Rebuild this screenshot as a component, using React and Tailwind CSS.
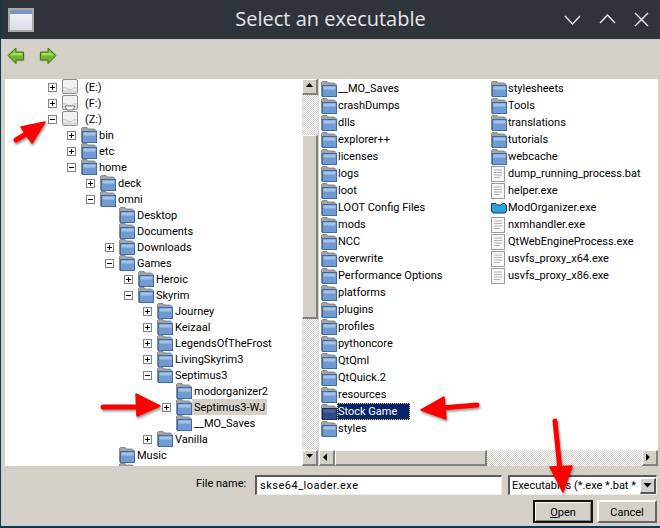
import React from "react";

const tree = [
  { d: 0, t: "(E:)", s: "+", drive: "hd" },
  { d: 0, t: "(F:)", s: "+", drive: "cd" },
  { d: 0, t: "(Z:)", s: "-", drive: "hd" },
  { d: 1, t: "bin", s: "+" },
  { d: 1, t: "etc", s: "+" },
  { d: 1, t: "home", s: "-" },
  { d: 2, t: "deck", s: "+" },
  { d: 2, t: "omni", s: "-" },
  { d: 3, t: "Desktop" },
  { d: 3, t: "Documents" },
  { d: 3, t: "Downloads", s: "+" },
  { d: 3, t: "Games", s: "-" },
  { d: 4, t: "Heroic", s: "+" },
  { d: 4, t: "Skyrim", s: "-" },
  { d: 5, t: "Journey", s: "+" },
  { d: 5, t: "Keizaal", s: "+" },
  { d: 5, t: "LegendsOfTheFrost", s: "+" },
  { d: 5, t: "LivingSkyrim3", s: "+" },
  { d: 5, t: "Septimus3", s: "-" },
  { d: 6, t: "modorganizer2" },
  { d: 6, t: "Septimus3-WJ", s: "+", hl: true },
  { d: 6, t: "__MO_Saves" },
  { d: 5, t: "Vanilla", s: "+" },
  { d: 3, t: "Music" },
  { d: 3, t: "" },
];

const col1 = ["__MO_Saves", "crashDumps", "dlls", "explorer++", "licenses", "logs", "loot", "LOOT Config Files", "mods", "NCC", "overwrite", "Performance Options", "platforms", "plugins", "profiles", "pythoncore", "QtQml", "QtQuick.2", "resources", "Stock Game", "styles"];
const col2 = [
  { t: "stylesheets", k: "folder" },
  { t: "Tools", k: "folder" },
  { t: "translations", k: "folder" },
  { t: "tutorials", k: "folder" },
  { t: "webcache", k: "folder" },
  { t: "dump_running_process.bat", k: "file" },
  { t: "helper.exe", k: "file" },
  { t: "ModOrganizer.exe", k: "mo" },
  { t: "nxmhandler.exe", k: "file" },
  { t: "QtWebEngineProcess.exe", k: "file" },
  { t: "usvfs_proxy_x64.exe", k: "file" },
  { t: "usvfs_proxy_x86.exe", k: "file" },
];

const Folder = ({ dark }) => (
  <svg width="16" height="16" viewBox="0 0 16 16" className="shrink-0">
    <path d="M0.5 15V1.5L1.5 0.5H6L7.5 2H13.5L15 3.5V5H2V15Z" fill="#a3a3a3" stroke="#77777a" strokeWidth="0.8" />
    <rect x="1.5" y="4.5" width="14" height="11" fill={dark ? "#2f4a86" : "#6f9bd2"} stroke={dark ? "#1d2f60" : "#3e6da6"} />
    <rect x="2.5" y="5.5" width="12" height="3" fill={dark ? "#4a66a0" : "#a5c3e6"} />
  </svg>
);

const Drive = ({ cd }) => (
  <svg width="16" height="16" viewBox="0 0 16 16" className="shrink-0">
    <rect x="0.5" y="0.5" width="15" height="14" rx="1.5" fill="#f2f2f2" stroke="#8c8c8c" />
    <path d="M1 9H5L6 10.5H10L11 9H15" fill="none" stroke="#c4c4c4" />
    <rect x="1" y="11" width="14" height="3" fill="#dcdcdc" />
    {cd && <path d="M3 11H13L11 15H5Z" fill="#ffffff" stroke="#777777" />}
  </svg>
);

const FileIcon = () => (
  <svg width="14" height="16" viewBox="0 0 14 16" className="shrink-0 mr-[2px]">
    <rect x="0.5" y="0.5" width="13" height="15" fill="#f7f7f7" stroke="#9a9a9a" />
    <path d="M3 4H11M3 6.5H11M3 9H11M3 11.5H9" stroke="#b4b4b4" />
  </svg>
);

const MoIcon = () => (
  <svg width="16" height="16" viewBox="0 0 16 16" className="shrink-0">
    <path d="M0.5 3.5H5L6.5 5H10L11.5 3.5H14L15.5 6V11L14 13H2L0.5 11Z" fill="#2ba3dd" stroke="#10384f" />
  </svg>
);

const Toggle = ({ s }) => (
  <span className="w-[9px] h-[9px] border border-[#808080] bg-white flex items-center justify-center relative shrink-0">
    <span className="absolute w-[5px] h-px bg-black" />
    {s === "+" && <span className="absolute w-px h-[5px] bg-black" />}
  </span>
);

const ScrollBtn = ({ dir }) => {
  const tri = {
    up: "M1 5L4.5 1L8 5Z",
    down: "M1 1H8L4.5 5Z",
    left: "M5 0.5V8L1 4.2Z",
    right: "M1 0.5V8L5 4.2Z",
  };
  return (
    <div className="w-4 h-4 shrink-0 bg-[#d4d0c8] border-t border-l border-t-white border-l-white border-r-2 border-b-2 border-r-[#808080] border-b-[#808080] flex items-center justify-center">
      <svg width="9" height="9" viewBox="0 0 9 9"><path d={tri[dir]} fill="#000" /></svg>
    </div>
  );
};

const Thumb = ({ className }) => (
  <div className={`bg-[#d4d0c8] border-t border-l border-t-white border-l-white border-r-2 border-b-2 border-r-[#808080] border-b-[#808080] ${className}`} />
);

const dither = "bg-[repeating-conic-gradient(#d4d0c8_0_25%,#ffffff_0_50%)] bg-[length:2px_2px]";

const NavArrow = ({ flip }) => (
  <svg width="18" height="18" viewBox="0 0 18 18" className={flip ? "-scale-x-100" : ""}>
    <path d="M1 9L9 1.5V5.5H17V13.5H9V17Z" fill="#000" opacity="0.15" transform="translate(0.5 1)" />
    <path d="M1 8.5L9 1V5H16.5V13H9V16.5Z" fill="#6fb52c" stroke="#3d7a12" />
    <path d="M3 8.5L8 4V6H15.5V8.5Z" fill="#a6dc62" />
  </svg>
);

const Arrow = ({ d, head }) => (
  <g>
    <path d={d} fill="none" stroke="#ff0000" strokeWidth="5" strokeLinecap="round" />
    <path d={head} fill="#ff0000" stroke="#ff0000" strokeWidth="1.5" strokeLinejoin="round" />
  </g>
);

export default function App() {
  return (
    <div className="relative w-[660px] h-[528px] overflow-hidden flex flex-col bg-[#d4d0c8] border-l border-b-2 border-[#0e3a55] text-black text-[11px] font-['Roboto','Noto_Sans',sans-serif]">
      {/* title bar */}
      <div className="h-[39px] shrink-0 bg-[#2f343a] flex items-center pl-[7px] pr-[11px]">
        <div className="w-[26px] h-[24px] border-2 border-[#a8a8a8] bg-gradient-to-b from-[#f4f4f4] to-[#d8dde6] relative">
          <div className="h-1 bg-[#7a94bd]" />
        </div>
        <div className="flex-1 text-center text-[20px] leading-none text-[#e4e6e8] font-['Open_Sans','Noto_Sans',sans-serif] pl-[63px] -mt-px">Select an executable</div>
        <div className="flex items-center gap-[18px] text-[#eceff1]">
          <svg width="17" height="17" viewBox="0 0 17 17"><path d="M1 5L8.5 13L16 5" fill="none" stroke="currentColor" strokeWidth="1.4" /></svg>
          <svg width="17" height="17" viewBox="0 0 17 17"><path d="M1 12L8.5 4L16 12" fill="none" stroke="currentColor" strokeWidth="1.4" /></svg>
          <svg width="15" height="15" viewBox="0 0 15 15"><path d="M1 1L14 14M14 1L1 14" fill="none" stroke="currentColor" strokeWidth="1.4" /></svg>
        </div>
      </div>
      <div className="h-px bg-[#c9ccd0] shrink-0" />

      {/* toolbar */}
      <div className="h-[39px] shrink-0 flex items-start pt-[7px] pl-[6px] gap-[14px]">
        <NavArrow />
        <NavArrow flip />
      </div>

      {/* panels */}
      <div className="h-[387px] shrink-0 flex pl-[4px] pr-[2px]">
        <div className="w-[297px] shrink-0 bg-white overflow-hidden">
          {tree.map((n, i) => (
            <div key={i} className="h-4 flex items-center" style={{ paddingLeft: 43 + n.d * 19 }}>
              <span className="w-[14px] shrink-0 flex">{n.s && <Toggle s={n.s} />}</span>
              {n.drive ? <Drive cd={n.drive === "cd"} /> : <Folder />}
              <span className={`${n.drive ? "ml-[5px]" : ""} px-[2px] pt-px h-4 whitespace-nowrap leading-[15px] ${n.hl ? "bg-[#d4d0c8]" : ""}`}>{n.t}</span>
            </div>
          ))}
        </div>
        <div className="w-4 shrink-0 flex flex-col">
          <ScrollBtn dir="up" />
          <div className={`h-10 ${dither}`} />
          <Thumb className="h-[184px]" />
          <div className={`flex-1 ${dither}`} />
          <ScrollBtn dir="down" />
        </div>
        <div className="flex-1 ml-px flex flex-col min-w-0">
          <div className="flex-1 bg-white flex pt-px pl-[2px] overflow-hidden">
            <div className="w-[170px] shrink-0">
              {col1.map((t) => {
                const sel = t === "Stock Game";
                return (
                  <div key={t} className="h-[17px] flex items-center">
                    <Folder dark={sel} />
                    <span className={`pl-px pt-px h-[17px] leading-[16px] whitespace-nowrap ${sel ? "pr-[13px] bg-[#0a246a] text-white outline-1 -outline-offset-1 outline-dotted outline-[#e6d25a]" : "pr-px"}`}>{t}</span>
                  </div>
                );
              })}
            </div>
            <div>
              {col2.map((f) => (
                <div key={f.t} className="h-[17px] flex items-center">
                  {f.k === "folder" && <Folder />}
                  {f.k === "file" && <FileIcon />}
                  {f.k === "mo" && <MoIcon />}
                  <span className="px-px pt-px h-[17px] leading-[16px] whitespace-nowrap">{f.t}</span>
                </div>
              ))}
            </div>
          </div>
          <div className="h-4 shrink-0 flex">
            <ScrollBtn dir="left" />
            <Thumb className="w-[152px] shrink-0" />
            <div className={`flex-1 ${dither}`} />
            <ScrollBtn dir="right" />
          </div>
        </div>
      </div>

      {/* file name + filter */}
      <div className="flex items-center mt-[9px] pl-[195px] pr-[3px] h-[20px] shrink-0">
        <span className="w-[59px] shrink-0 -mt-[1px]">File name:</span>
        <div className="w-[247px] h-[20px] shrink-0 bg-white border-t-2 border-l-2 border-t-[#5a5a5a] border-l-[#5a5a5a] border-r border-b border-r-[#eeeeee] border-b-[#eeeeee] px-[3px] leading-[17px] tracking-[0.5px]">skse64_loader.exe</div>
        <div className="ml-[6px] flex-1 h-[20px] bg-white border-t-2 border-l-2 border-t-[#5a5a5a] border-l-[#5a5a5a] border-r border-b border-r-[#eeeeee] border-b-[#eeeeee] flex items-center pl-[2px] overflow-hidden">
          <span className="flex-1 whitespace-nowrap leading-[17px]">Executables (*.exe *.bat *</span>
          <div className="w-4 h-4 shrink-0 bg-[#d4d0c8] border-t border-l border-t-white border-l-white border-r-2 border-b-2 border-r-[#555555] border-b-[#555555] flex items-center justify-center">
            <svg width="9" height="9" viewBox="0 0 9 9"><path d="M0.5 2H8.5L4.5 6.5Z" fill="#000" /></svg>
          </div>
        </div>
      </div>

      {/* buttons */}
      <div className="flex justify-end gap-1 mt-[5px] pr-[3px]">
        <button className="w-[60px] h-[23px] pt-px bg-[#d4d0c8] border-2 border-[#141414] shadow-[inset_1px_1px_0_#ffffff,inset_-1px_-1px_0_#808080] leading-none"><span className="underline">O</span>pen</button>
        <button className="w-[60px] h-[23px] pt-px bg-[#d4d0c8] border-t-2 border-l-2 border-t-white border-l-white border-r-2 border-b-2 border-r-[#666666] border-b-[#666666] leading-none">Cancel</button>
      </div>

      {/* red annotation arrows */}
      <svg className="absolute left-0 top-0 pointer-events-none drop-shadow-[1px_2px_1px_rgba(0,0,0,0.4)]" width="660" height="528" viewBox="0 0 660 528">
        <Arrow d="M15 140L30 131" head="M44 122L20 127L31 143Z" />
        <Arrow d="M102 407L136 407" head="M159 406L135 394L136 416Z" />
        <Arrow d="M476 405L440 408" head="M420 410L443 397L445 419Z" />
        <Arrow d="M554 421L559 470" head="M562 492L549 467L571 466Z" />
      </svg>
    </div>
  );
}
